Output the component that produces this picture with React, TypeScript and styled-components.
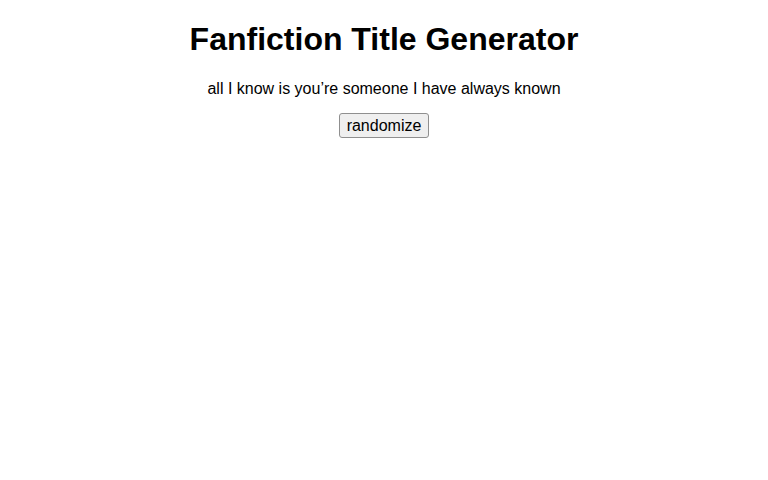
import styled, { createGlobalStyle } from 'styled-components';

const GlobalStyle = createGlobalStyle`
  body {
    margin: 0;
    font-family: "Liberation Sans", Arial, sans-serif;
    background: #fff;
    color: #000;
  }
`;

const Page = styled.main`
  display: flex;
  flex-direction: column;
  align-items: center;
  text-align: center;
`;

const Title = styled.h1`
  font-size: 32px;
  font-weight: bold;
  margin: 21px 0 22px;
`;

const Generated = styled.p`
  font-size: 16px;
  margin: 0 0 15px;
`;

const RandomizeButton = styled.button`
  font-family: "Liberation Sans", Arial, sans-serif;
  font-size: 16px;
  line-height: 19px;
  color: #000;
  background: #efefef;
  border: 1px solid #8f8f8f;
  border-radius: 3px;
  padding: 2px 7px;
  cursor: pointer;

  &:hover {
    background: #e5e5e5;
  }
`;

export default function App() {
  return (
    <>
      <GlobalStyle />
      <Page>
        <Title>Fanfiction Title Generator</Title>
        <Generated>all I know is you’re someone I have always known</Generated>
        <RandomizeButton>randomize</RandomizeButton>
      </Page>
    </>
  );
}
